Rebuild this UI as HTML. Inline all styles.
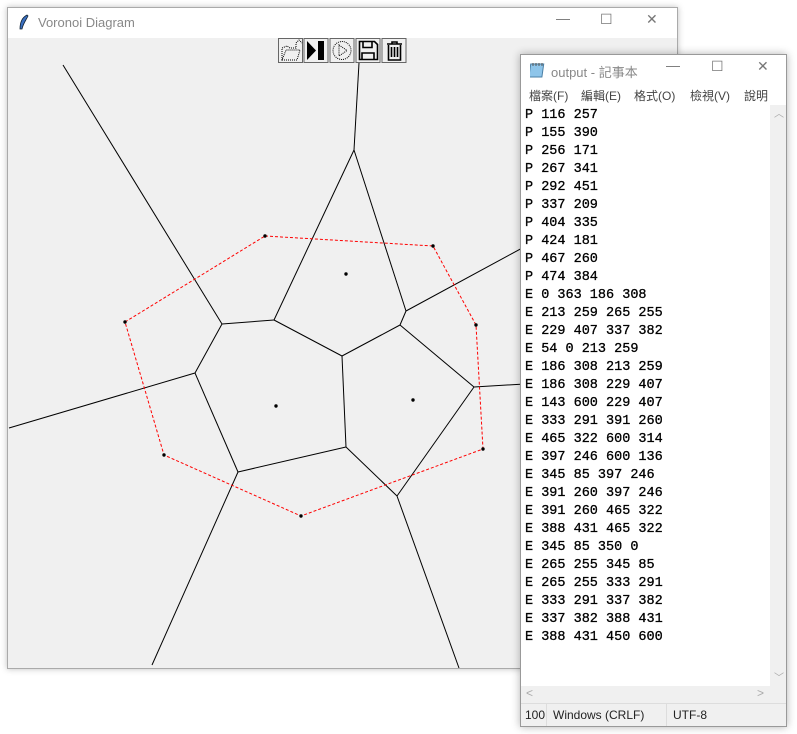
<!DOCTYPE html>
<html><head><meta charset="utf-8"><style>
*{margin:0;padding:0;box-sizing:border-box}
body{width:797px;height:734px;background:#fff;position:relative;overflow:hidden;font-family:"Liberation Sans","Noto Sans CJK TC",sans-serif}
#main{position:absolute;left:7px;top:7px;width:671px;height:662px;border:1px solid #aaa;background:#f0f0f0;box-shadow:0 0 6px rgba(0,0,0,.25)}
#main .tb{height:30px;background:#fff;position:relative;font-size:13px;color:#888}
.tb .t{position:absolute;left:30px;top:7px}
.ctl{position:absolute;top:5px;font-size:14px;color:#777;font-weight:300}
#np{position:absolute;left:520px;top:54px;width:267px;height:673px;border:1px solid #999;background:#f0f0f0;box-shadow:0 0 8px rgba(0,0,0,.3)}
#np .tb{height:30px;background:#fff;position:relative;font-size:13px;color:#888}
.menu{height:20px;background:#fff;font-size:12px;color:#444;position:relative}
.menu span{position:absolute;top:2px}
.txt{position:absolute;left:0;top:50px;width:249px;height:581px;background:#fff;font-family:"Liberation Mono",monospace;font-size:13.5px;line-height:18px;padding:2px 0 0 4px;color:#000;white-space:pre;-webkit-text-stroke:0.3px #000}
.vs{position:absolute;left:249px;top:50px;width:16px;height:581px;background:#f0f0f0}
.hs{position:absolute;left:0;top:631px;width:265px;height:17px;background:#f0f0f0}
.sb{position:absolute;left:0;top:648px;width:265px;height:23px;background:#f0f0f0;border-top:1px solid #ddd;font-size:12px;color:#222}
.sb span{position:absolute;top:4px}
</style></head><body>
<div id="main">
<div class="tb"><svg style="position:absolute;left:10px;top:6px" width="12" height="18"><path d="M9 1 C3 4 2 10 2 15 L4 15 C5 10 8 6 10 2Z" fill="#3a6fc0" stroke="#123" stroke-width=".8"/></svg><span class="t">Voronoi Diagram</span>
<span class="ctl" style="left:548px;top:2px">—</span><span class="ctl" style="left:592px;top:3px">☐</span><span class="ctl" style="left:638px;top:3px">✕</span></div>
</div>
<svg style="position:absolute;left:0;top:0" width="797" height="734">
<defs><clipPath id="c"><rect x="8" y="38" width="669" height="630"/></clipPath></defs>
<g clip-path="url(#c)" stroke="#000" stroke-width="1" fill="none">
<line x1="9" y1="428" x2="195" y2="373"/><line x1="222" y1="324" x2="274" y2="320"/><line x1="238" y1="472" x2="346" y2="447"/><line x1="63" y1="65" x2="222" y2="324"/><line x1="195" y1="373" x2="222" y2="324"/><line x1="195" y1="373" x2="238" y2="472"/><line x1="152" y1="665" x2="238" y2="472"/><line x1="342" y1="356" x2="400" y2="325"/><line x1="474" y1="387" x2="609" y2="379"/><line x1="406" y1="311" x2="609" y2="201"/><line x1="354" y1="150" x2="406" y2="311"/><line x1="400" y1="325" x2="406" y2="311"/><line x1="400" y1="325" x2="474" y2="387"/><line x1="397" y1="496" x2="474" y2="387"/><line x1="354" y1="150" x2="359" y2="63"/><line x1="274" y1="320" x2="354" y2="150"/><line x1="274" y1="320" x2="342" y2="356"/><line x1="342" y1="356" x2="346" y2="447"/><line x1="346" y1="447" x2="397" y2="496"/><line x1="397" y1="496" x2="459" y2="668"/>
<polygon points="265,236 433,246 476,325 483,449 301,516 164,455 125,322" stroke="#f00" stroke-dasharray="3,2"/>
</g>
<g fill="#000"><circle cx="265" cy="236" r="1.7"/><circle cx="433" cy="246" r="1.7"/><circle cx="476" cy="325" r="1.7"/><circle cx="483" cy="449" r="1.7"/><circle cx="301" cy="516" r="1.7"/><circle cx="164" cy="455" r="1.7"/><circle cx="125" cy="322" r="1.7"/><circle cx="346" cy="274" r="1.7"/><circle cx="276" cy="406" r="1.7"/><circle cx="413" cy="400" r="1.7"/></g>
<g stroke="#666" fill="#f0f0f0"><rect x="278.5" y="38.5" width="24" height="24"/><rect x="304" y="38.5" width="24" height="24"/><rect x="330" y="38.5" width="24" height="24"/><rect x="356" y="38.5" width="24" height="24"/><rect x="382" y="38.5" width="24" height="24"/></g>
<path d="M282 60 L282 48 L287 46 L290 48 L296 48 L296 43 L299 40 L302 43 M282 60 L297 60 L300 50 L286 50 Z" stroke="#000" stroke-dasharray="1,1" fill="none"/>
<path d="M307 41 L316 50.5 L307 60 Z" fill="#000"/><rect x="318" y="41" width="6" height="19" fill="#000"/>
<circle cx="342" cy="50.5" r="9" fill="none" stroke="#000" stroke-dasharray="1,1"/><path d="M339 45 L347 50.5 L339 56Z" fill="none" stroke="#000" stroke-dasharray="1,1"/>
<path d="M359.5 41.5 h15 l3 3 v15 h-18z M363 41.5 v6 h9 v-6 M362 60 v-7 h12 v7" fill="none" stroke="#000" stroke-width="1.6"/>
<path d="M387 44 h15 M392 44 v-2 h5 v2 M388.5 45 v15 h12 v-15 M391.5 47 v10 M394.5 47 v10 M397.5 47 v10" fill="none" stroke="#000" stroke-width="1.6"/>
</svg>
<div id="np">
<div class="tb"><svg style="position:absolute;left:9px;top:7px" width="16" height="16"><rect x="1" y="2" width="13" height="13" fill="#8ec5ea" stroke="#4a7fa5" transform="skewX(-8)"/><path d="M3 1 v3 M6 1 v3 M9 1 v3 M12 1 v3" stroke="#555"/></svg><span style="position:absolute;left:30px;top:7px">output - 記事本</span>
<span class="ctl" style="left:145px;top:2px">—</span><span class="ctl" style="left:190px;top:3px">☐</span><span class="ctl" style="left:236px;top:3px">✕</span></div>
<div class="menu"><span style="left:8px">檔案(F)</span><span style="left:60px">編輯(E)</span><span style="left:113px">格式(O)</span><span style="left:169px">檢視(V)</span><span style="left:223px">說明</span></div>
<div class="txt">P 116 257
P 155 390
P 256 171
P 267 341
P 292 451
P 337 209
P 404 335
P 424 181
P 467 260
P 474 384
E 0 363 186 308
E 213 259 265 255
E 229 407 337 382
E 54 0 213 259
E 186 308 213 259
E 186 308 229 407
E 143 600 229 407
E 333 291 391 260
E 465 322 600 314
E 397 246 600 136
E 345 85 397 246
E 391 260 397 246
E 391 260 465 322
E 388 431 465 322
E 345 85 350 0
E 265 255 345 85
E 265 255 333 291
E 333 291 337 382
E 337 382 388 431
E 388 431 450 600</div>
<div class="vs"><span style="position:absolute;left:4px;top:0;font-size:10px;color:#aaa">︿</span><span style="position:absolute;left:4px;top:564px;font-size:10px;color:#aaa">﹀</span></div>
<div class="hs"><span style="position:absolute;left:5px;top:0;font-size:12px;color:#aaa">&lt;</span><span style="position:absolute;left:236px;top:0;font-size:12px;color:#aaa">&gt;</span></div>
<div class="sb"><span style="left:4px">100</span><span style="left:25px;top:0;width:1px;height:22px;background:#ddd"></span><span style="left:32px">Windows (CRLF)</span><span style="left:145px;top:0;width:1px;height:22px;background:#ddd"></span><span style="left:152px">UTF-8</span></div>
</div>
</body></html>
